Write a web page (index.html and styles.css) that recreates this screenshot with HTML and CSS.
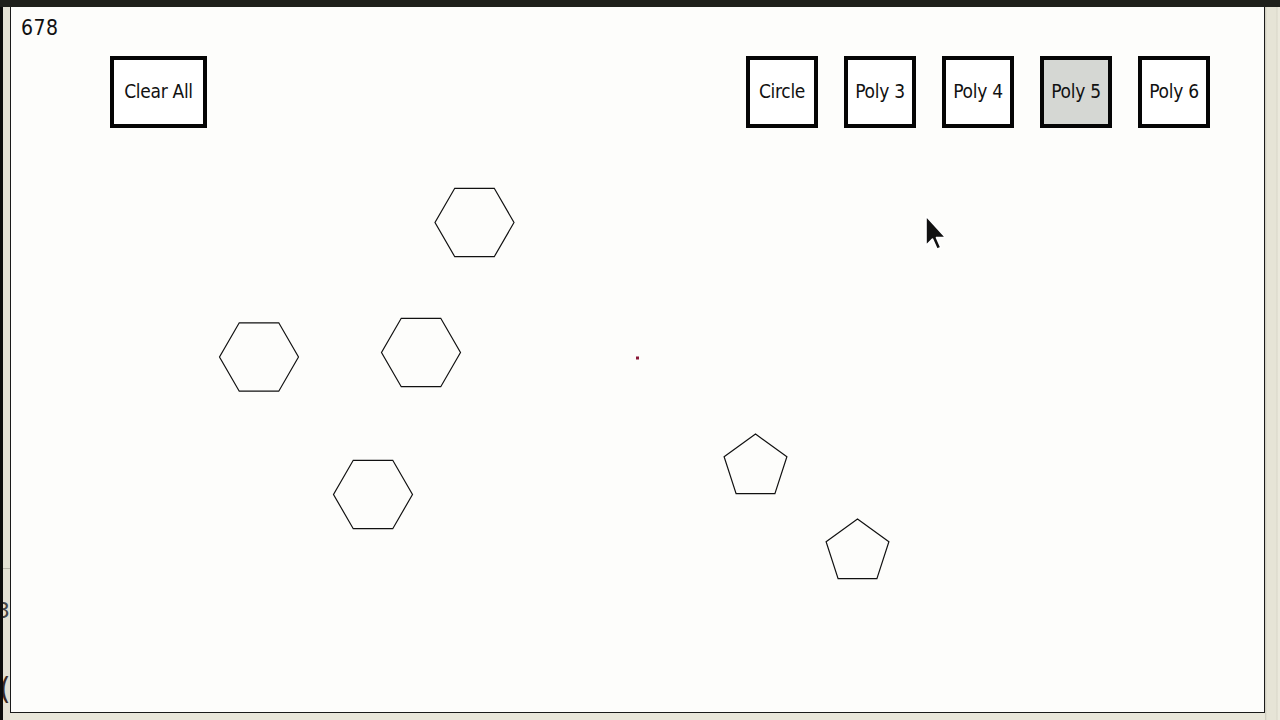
FILE: index.html
```html
<!DOCTYPE html>
<html>
<head>
<meta charset="utf-8">
<link rel="stylesheet" href="styles.css">
</head>
<body>
<div class="screen">
  <div class="topbar"></div>
  <div class="left-strip">
    <div class="edge"></div>
    <div class="behind">
      <span class="ghost-line"></span>
      <span class="ghost g3">3</span>
      <span class="ghost gp">(</span>
    </div>
  </div>
  <div class="canvas">
    <div class="counter">678</div>
    <div class="toolbar">
      <button class="btn wide">Clear All</button>
      <div class="group">
        <button class="btn">Circle</button>
        <button class="btn">Poly 3</button>
        <button class="btn">Poly 4</button>
        <button class="btn active">Poly 5</button>
        <button class="btn">Poly 6</button>
      </div>
    </div>
    <svg class="sketch" width="1253" height="705" viewBox="11 7 1253 705" xmlns="http://www.w3.org/2000/svg">
      <g fill="none" stroke="#111" stroke-width="1.2">
        <polygon points="514,222.5 494.25,256.7 454.75,256.7 435,222.5 454.75,188.3 494.25,188.3"/>
        <polygon points="298.5,357 278.75,391.2 239.25,391.2 219.5,357 239.25,322.8 278.75,322.8"/>
        <polygon points="460.5,352.5 440.75,386.7 401.25,386.7 381.5,352.5 401.25,318.3 440.75,318.3"/>
        <polygon points="412.5,494.5 392.75,528.7 353.25,528.7 333.5,494.5 353.25,460.3 392.75,460.3"/>
        <polygon points="755.5,434 786.9,456.8 774.9,493.7 736.1,493.7 724.1,456.8"/>
        <polygon points="857.5,519 888.9,541.8 876.9,578.7 838.1,578.7 826.1,541.8"/>
      </g>
      <rect x="636" y="356.5" width="3" height="3" fill="#8a1838"/>
      <path d="M926 216 L926 245.6 L932.5 239.1 L937.1 249.3 L940.8 247.5 L936.5 237.6 L945.4 237.3 Z" fill="#111" stroke="#fff" stroke-width="1.6" stroke-linejoin="round"/>
    </svg>
  </div>
  <div class="right-strip"></div>
  <div class="bottom-strip"></div>
</div>
</body>
</html>
```
FILE: styles.css
```css
html, body {
  margin: 0;
  padding: 0;
  width: 1280px;
  height: 720px;
  overflow: hidden;
  background: #e7e5d8;
}

.screen {
  display: grid;
  grid-template-columns: 10px 1255px 15px;
  grid-template-rows: 7px 706px 7px;
  width: 1280px;
  height: 720px;
}

.topbar {
  grid-column: 1 / 4;
  grid-row: 1;
  background: #1f201b;
}

.left-strip {
  grid-column: 1;
  grid-row: 2 / 4;
  display: flex;
  background: #e3e1d4;
  overflow: hidden;
}

.edge {
  width: 3px;
  flex: none;
  background: #0c0c0c;
}

.behind {
  flex: 1;
  display: flex;
  flex-direction: column;
  overflow: hidden;
}

.ghost-line {
  display: block;
  height: 1px;
  margin-top: 561px;
  background: #b8b6aa;
}

.ghost {
  display: block;
  font-family: "DejaVu Sans", sans-serif;
  line-height: 1;
  margin-left: -7px;
}

.g3 {
  margin-top: 31px;
  font-size: 22px;
  color: #444;
}

.gp {
  margin-top: 52px;
  font-size: 30px;
  color: #3a2a25;
  margin-left: -4px;
}

.canvas {
  grid-column: 2;
  grid-row: 2;
  position: relative;
  background: #fdfdfb;
  border-left: 1px solid #1a1a1a;
  border-right: 1px solid #1a1a1a;
  border-bottom: 1px solid #1a1a1a;
  box-sizing: border-box;
}

.counter {
  position: absolute;
  left: 10px;
  top: 11px;
  font-family: "DejaVu Sans Condensed", "DejaVu Sans", sans-serif;
  font-size: 21px;
  line-height: 21px;
  color: #111;
  letter-spacing: 0.5px;
}

.toolbar {
  display: flex;
  justify-content: space-between;
  align-items: flex-start;
  padding: 49px 54px 0 99px;
}

.group {
  display: flex;
  gap: 26px;
}

.btn {
  box-sizing: border-box;
  width: 72px;
  height: 72px;
  border: 4px solid #050505;
  background: #ffffff;
  padding: 0 0 3px 0;
  margin: 0;
  font-family: "DejaVu Sans Condensed", "DejaVu Sans", sans-serif;
  font-size: 19px;
  letter-spacing: -0.3px;
  color: #111;
  display: flex;
  align-items: center;
  justify-content: center;
  white-space: nowrap;
}

.btn.wide {
  width: 97px;
}

.btn.active {
  background: #d5d7d3;
}

.sketch {
  position: absolute;
  left: 0;
  top: 0;
  pointer-events: none;
}

.right-strip {
  grid-column: 3;
  grid-row: 2 / 4;
  background: linear-gradient(to right, #c9c7ba 0, #e6e4d6 2px, #e6e4d6 11px, #d8d6c8 12px, #ebe9dc 13px);
}

.bottom-strip {
  grid-column: 2;
  grid-row: 3;
  background: #e9e7da;
}
```
